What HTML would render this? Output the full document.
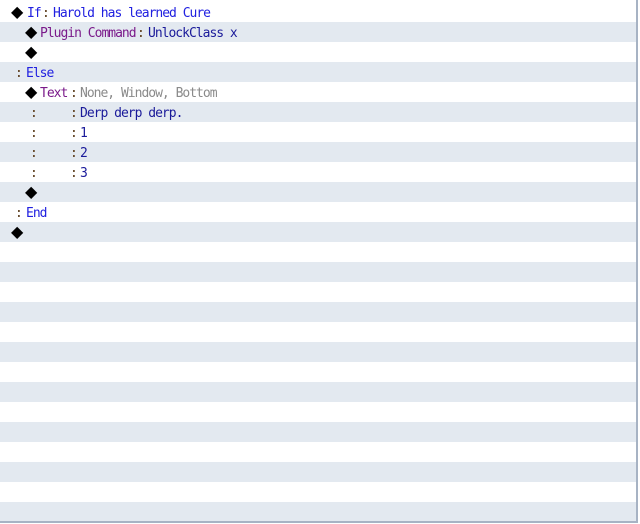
<!DOCTYPE html>
<html><head><meta charset="utf-8"><style>
html,body{margin:0;padding:0;background:#fff;}
.wrap{position:relative;width:640px;height:524px;overflow:hidden;background:#fff;}
.frame{position:absolute;left:0;top:0;width:636px;height:521px;border-right:2px solid #a7b3c4;border-bottom:2px solid #a7b3c4;}
.row{position:absolute;left:0;width:636px;height:20px;}
.g{background:#e3e9f0;}
.t{position:absolute;font-family:"DejaVu Sans Mono","Liberation Mono",monospace;font-size:13px;letter-spacing:-1px;line-height:20px;white-space:pre;margin-top:1px;margin-left:1px;}
.d{position:absolute;font-family:"DejaVu Sans",sans-serif;font-size:16px;line-height:20px;color:#000;}
.c{color:#5a3a1a;}
.b{color:#2020e0;}
.nb{color:#1a1a9a;}
.p{color:#7a1a8a;}
.gr{color:#8a8a8a;}
</style></head><body><div class="wrap">
<div class="row g" style="top:22px"></div>
<div class="row g" style="top:62px"></div>
<div class="row g" style="top:102px"></div>
<div class="row g" style="top:142px"></div>
<div class="row g" style="top:182px"></div>
<div class="row g" style="top:222px"></div>
<div class="row g" style="top:262px"></div>
<div class="row g" style="top:302px"></div>
<div class="row g" style="top:342px"></div>
<div class="row g" style="top:382px"></div>
<div class="row g" style="top:422px"></div>
<div class="row g" style="top:462px"></div>
<div class="row g" style="top:502px"></div>
<div class="frame"></div>

<span class="d" style="left:11px;top:2px">◆</span>
<span class="t b" style="left:26px;top:3px">If</span>
<span class="t c" style="left:41px;top:3px">:</span>
<span class="t b" style="left:52px;top:3px">Harold has learned Cure</span>

<span class="d" style="left:25px;top:22px">◆</span>
<span class="t p" style="left:39px;top:23px">Plugin Command</span>
<span class="t c" style="left:136px;top:23px">:</span>
<span class="t nb" style="left:147px;top:23px">UnlockClass x</span>

<span class="d" style="left:25px;top:42px">◆</span>

<span class="t c" style="left:14px;top:63px">:</span>
<span class="t b" style="left:25px;top:63px">Else</span>

<span class="d" style="left:25px;top:82px">◆</span>
<span class="t p" style="left:39px;top:83px">Text</span>
<span class="t c" style="left:69px;top:83px">:</span>
<span class="t gr" style="left:79px;top:83px">None, Window, Bottom</span>

<span class="t c" style="left:29px;top:103px">:</span>
<span class="t c" style="left:69px;top:103px">:</span>
<span class="t nb" style="left:79px;top:103px">Derp derp derp.</span>

<span class="t c" style="left:29px;top:123px">:</span>
<span class="t c" style="left:69px;top:123px">:</span>
<span class="t nb" style="left:79px;top:123px">1</span>

<span class="t c" style="left:29px;top:143px">:</span>
<span class="t c" style="left:69px;top:143px">:</span>
<span class="t nb" style="left:79px;top:143px">2</span>

<span class="t c" style="left:29px;top:163px">:</span>
<span class="t c" style="left:69px;top:163px">:</span>
<span class="t nb" style="left:79px;top:163px">3</span>

<span class="d" style="left:25px;top:182px">◆</span>

<span class="t c" style="left:14px;top:203px">:</span>
<span class="t b" style="left:25px;top:203px">End</span>

<span class="d" style="left:11px;top:222px">◆</span>
</div></body></html>
